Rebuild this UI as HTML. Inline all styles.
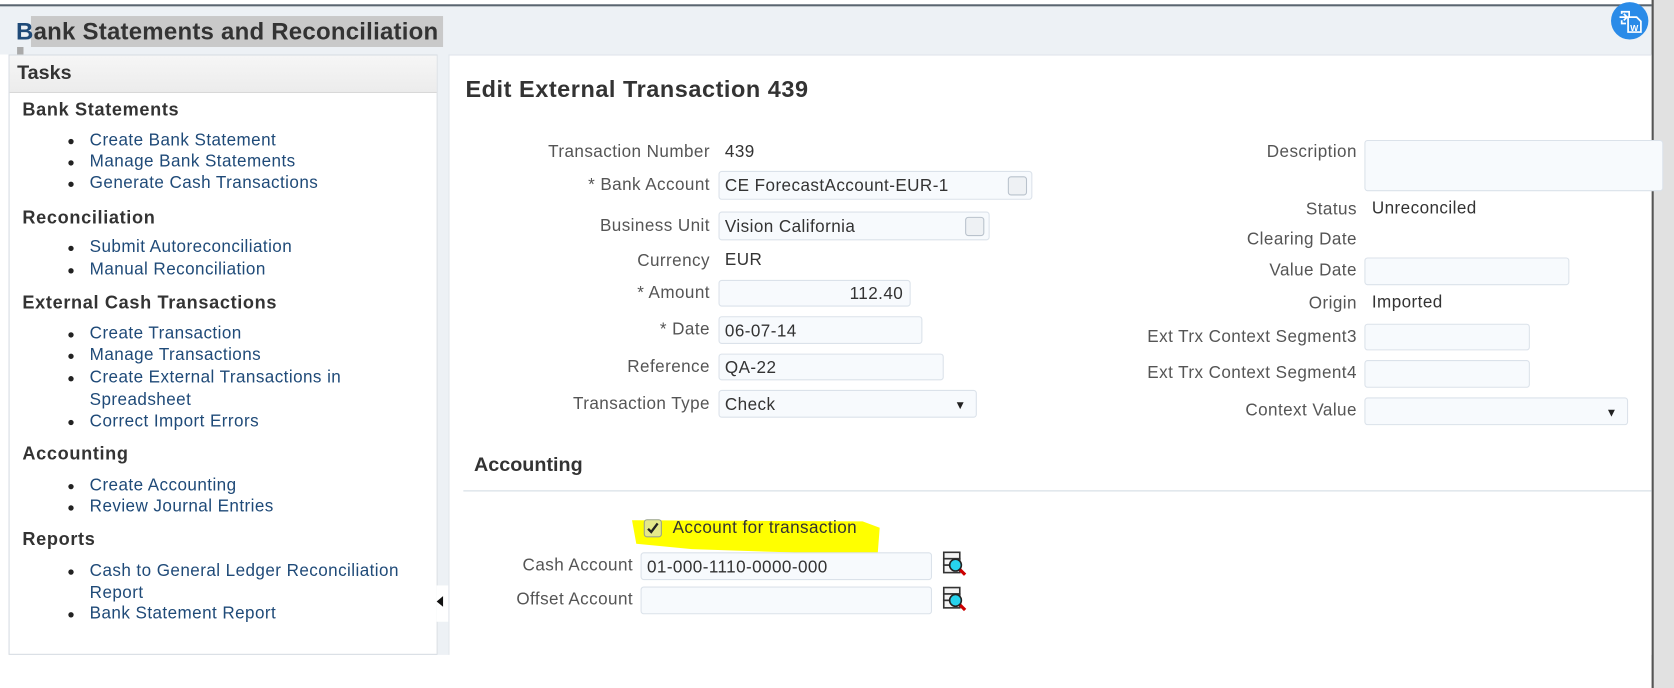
<!DOCTYPE html>
<html><head><meta charset="utf-8"><style>
html,body{margin:0;padding:0;width:1674px;height:688px;overflow:hidden;background:#fff;}
#w{position:absolute;left:0;top:0;width:1568px;height:644px;transform:scale(1.0676,1.0683);transform-origin:0 0;font-family:"Liberation Sans",Arial,sans-serif;color:#444;}
.a{position:absolute;white-space:nowrap;}
.lab{position:absolute;font-size:16px;letter-spacing:0.4px;color:#555;text-align:right;white-space:nowrap;line-height:18px;}
.val{position:absolute;font-size:16px;letter-spacing:0.4px;color:#333;white-space:nowrap;line-height:18px;}
.in{position:absolute;background:#f7fafd;border:1px solid #dbe2ea;border-radius:3px;box-sizing:border-box;font-size:16px;letter-spacing:0.4px;color:#333;line-height:27px;padding-left:5px;}
.btn{position:absolute;width:18px;height:18px;border:1px solid #b9c2cc;border-radius:3px;background:#eef1f4;box-sizing:border-box;top:4px;}
.arr{position:absolute;font-size:11px;color:#222;top:1px;}
.h{position:absolute;font-weight:bold;font-size:17px;letter-spacing:0.6px;color:#333;left:21px;}
.li{position:absolute;font-size:16px;letter-spacing:0.4px;color:#1f4a78;left:84px;line-height:20.5px;}
.li:before{content:"";position:absolute;left:-20px;top:8px;width:5px;height:5px;border-radius:50%;background:#222;}
</style></head><body><div id="w">
<div class="a" style="left:0;top:0;width:1547px;height:4px;background:#fff"></div>
<div class="a" style="left:0;top:4px;width:1547px;height:2px;background:#5a6570"></div>
<div class="a" style="left:0;top:6px;width:1547px;height:45px;background:#edf1f5"></div>
<div class="a" style="left:29px;top:15px;width:386px;height:29px;background:#c9c9c9"></div>
<div class="a" style="left:15px;top:16px;font-size:22.5px;letter-spacing:0.2px;font-weight:bold;color:#333;line-height:28px"><span style="color:#1f4a78">B</span>ank Statements and Reconciliation</div>
<div class="a" style="left:16px;top:44px;width:6px;height:7px;background:#aaa"></div>
<div class="a" style="left:1547px;top:0;width:21px;height:644px;background:#e1e1e1;border-left:2px solid #555;box-sizing:border-box"></div>
<div class="a" style="left:1509px;top:2px;width:35px;height:35px;border-radius:50%;background:#2a8be8"></div>
<svg class="a" style="left:1509px;top:2px" width="35" height="35" viewBox="0 0 35 35"><g fill="none" stroke="#fff" stroke-width="1.6"><path d="M8 14h6M12 11l3 3-3 3"/><path d="M10 11V9h7v5"/><path d="M10 17v3h4"/><path d="M16 14h8l4 4v10H16z"/><text x="18" y="27" font-size="8" fill="#fff" stroke="none" font-family="Liberation Sans" font-weight="bold">W</text></g></svg>
<div class="a" style="left:8px;top:51px;width:402px;height:562px;border:1px solid #d6dce2;box-sizing:border-box;background:#fff"></div>
<div class="a" style="left:9px;top:52px;width:400px;height:34px;background:linear-gradient(#f6f6f6,#ececec);border-bottom:1px solid #d6d6d6"></div>
<div class="a" style="left:16px;top:57px;font-size:18.5px;font-weight:bold;color:#333">Tasks</div>
<div class="h" style="top:93px">Bank Statements</div>
<div class="li" style="top:122px">Create Bank Statement</div>
<div class="li" style="top:142px">Manage Bank Statements</div>
<div class="li" style="top:162px">Generate Cash Transactions</div>
<div class="h" style="top:194px">Reconciliation</div>
<div class="li" style="top:222px">Submit Autoreconciliation</div>
<div class="li" style="top:243px">Manual Reconciliation</div>
<div class="h" style="top:274px">External Cash Transactions</div>
<div class="li" style="top:303px">Create Transaction</div>
<div class="li" style="top:323px">Manage Transactions</div>
<div class="li" style="top:344px">Create External Transactions in<br>Spreadsheet</div>
<div class="li" style="top:385px">Correct Import Errors</div>
<div class="h" style="top:415px">Accounting</div>
<div class="li" style="top:445px">Create Accounting</div>
<div class="li" style="top:465px">Review Journal Entries</div>
<div class="h" style="top:495px">Reports</div>
<div class="li" style="top:525px">Cash to General Ledger Reconciliation<br>Report</div>
<div class="li" style="top:565px">Bank Statement Report</div>
<div class="a" style="left:410px;top:51px;width:10px;height:562px;background:#edf1f5"></div>
<div class="a" style="left:409px;top:548px;width:12px;height:34px;background:#fff"></div>
<div class="a" style="left:409px;top:558px;width:0;height:0;border-top:5px solid transparent;border-bottom:5px solid transparent;border-right:6px solid #111"></div>
<div class="a" style="left:420px;top:51px;width:1127px;height:562px;background:#fff;border-left:1px solid #dfe4ea;border-top:1px solid #dfe4ea;box-sizing:border-box"></div>
<div class="a" style="left:436px;top:71px;font-size:22px;letter-spacing:0.5px;font-weight:bold;color:#333">Edit External Transaction 439</div>
<div class="lab" style="right:903px;top:134px">Transaction Number</div><div class="val" style="left:679px;top:134px">439</div>
<div class="lab" style="right:903px;top:165px">* Bank Account</div>
<div class="in" style="left:673px;top:160px;width:294px;height:27px">CE ForecastAccount-EUR-1<div class="btn" style="left:270px"></div></div>
<div class="lab" style="right:903px;top:203px">Business Unit</div>
<div class="in" style="left:673px;top:198px;width:254px;height:27px">Vision California<div class="btn" style="left:230px"></div></div>
<div class="lab" style="right:903px;top:236px">Currency</div><div class="val" style="left:679px;top:235px">EUR</div>
<div class="lab" style="right:903px;top:266px">* Amount</div>
<div class="in" style="left:673px;top:262px;width:180px;height:25px;text-align:right;padding-right:6px;line-height:25px">112.40</div>
<div class="lab" style="right:903px;top:300px">* Date</div>
<div class="in" style="left:673px;top:296px;width:191px;height:26px">06-07-14</div>
<div class="lab" style="right:903px;top:335px">Reference</div>
<div class="in" style="left:673px;top:331px;width:211px;height:25px;line-height:25px">QA-22</div>
<div class="lab" style="right:903px;top:370px">Transaction Type</div>
<div class="in" style="left:673px;top:365px;width:242px;height:26px">Check<span class="arr" style="left:220px;top:1px">▼</span></div>
<div class="lab" style="right:297px;top:134px">Description</div>
<div class="in" style="left:1278px;top:131px;width:280px;height:48px"></div>
<div class="lab" style="right:297px;top:188px">Status</div><div class="val" style="left:1285px;top:187px">Unreconciled</div>
<div class="lab" style="right:297px;top:216px">Clearing Date</div>
<div class="lab" style="right:297px;top:245px">Value Date</div>
<div class="in" style="left:1278px;top:241px;width:192px;height:26px"></div>
<div class="lab" style="right:297px;top:276px">Origin</div><div class="val" style="left:1285px;top:275px">Imported</div>
<div class="lab" style="right:297px;top:307px">Ext Trx Context Segment3</div>
<div class="in" style="left:1278px;top:303px;width:155px;height:25px"></div>
<div class="lab" style="right:297px;top:341px">Ext Trx Context Segment4</div>
<div class="in" style="left:1278px;top:337px;width:155px;height:26px"></div>
<div class="lab" style="right:297px;top:376px">Context Value</div>
<div class="in" style="left:1278px;top:372px;width:247px;height:26px"><span class="arr" style="left:225px">▼</span></div>
<div class="a" style="left:444px;top:424px;font-size:18.5px;font-weight:bold;color:#333">Accounting</div>
<div class="a" style="left:434px;top:459px;width:1113px;height:1px;background:#d3dbe3"></div>
<svg class="a" style="left:588px;top:484px" width="240" height="40"><path d="M4 3 L220 4 L236 10 L234 36 L150 33 L60 30 L8 25 Z" fill="#ffff00"/></svg>
<div class="a" style="left:603px;top:486px;width:17px;height:17px;border:1px solid #9aa38a;border-radius:3px;background:#e4e88a;box-sizing:border-box"></div>
<svg class="a" style="left:603px;top:486px" width="17" height="17"><path d="M4 9l3 3 6-8" fill="none" stroke="#222" stroke-width="2.2"/></svg>
<div class="val" style="left:630px;top:486px;color:#333">Account for transaction</div>
<div class="lab" style="right:975px;top:521px">Cash Account</div>
<div class="in" style="left:600px;top:517px;width:273px;height:26px">01-000-1110-0000-000</div>
<div class="lab" style="right:975px;top:553px">Offset Account</div>
<div class="in" style="left:600px;top:549px;width:273px;height:26px"></div>
<svg class="a" style="left:882px;top:515px" width="26" height="26" viewBox="0 0 26 26"><g fill="#f4f4f4" stroke="#333" stroke-width="1.5"><rect x="2" y="2" width="15" height="6"/><rect x="2" y="8" width="15" height="6"/><rect x="2" y="14" width="15" height="7"/></g><path d="M16 17l6 6" stroke="#c00" stroke-width="3"/><circle cx="13" cy="14" r="5.5" fill="#27d3ee" stroke="#222" stroke-width="1.5"/></svg>
<svg class="a" style="left:882px;top:548px" width="26" height="26" viewBox="0 0 26 26"><g fill="#f4f4f4" stroke="#333" stroke-width="1.5"><rect x="2" y="2" width="15" height="6"/><rect x="2" y="8" width="15" height="6"/><rect x="2" y="14" width="15" height="7"/></g><path d="M16 17l6 6" stroke="#c00" stroke-width="3"/><circle cx="13" cy="14" r="5.5" fill="#27d3ee" stroke="#222" stroke-width="1.5"/></svg>
</div></body></html>
